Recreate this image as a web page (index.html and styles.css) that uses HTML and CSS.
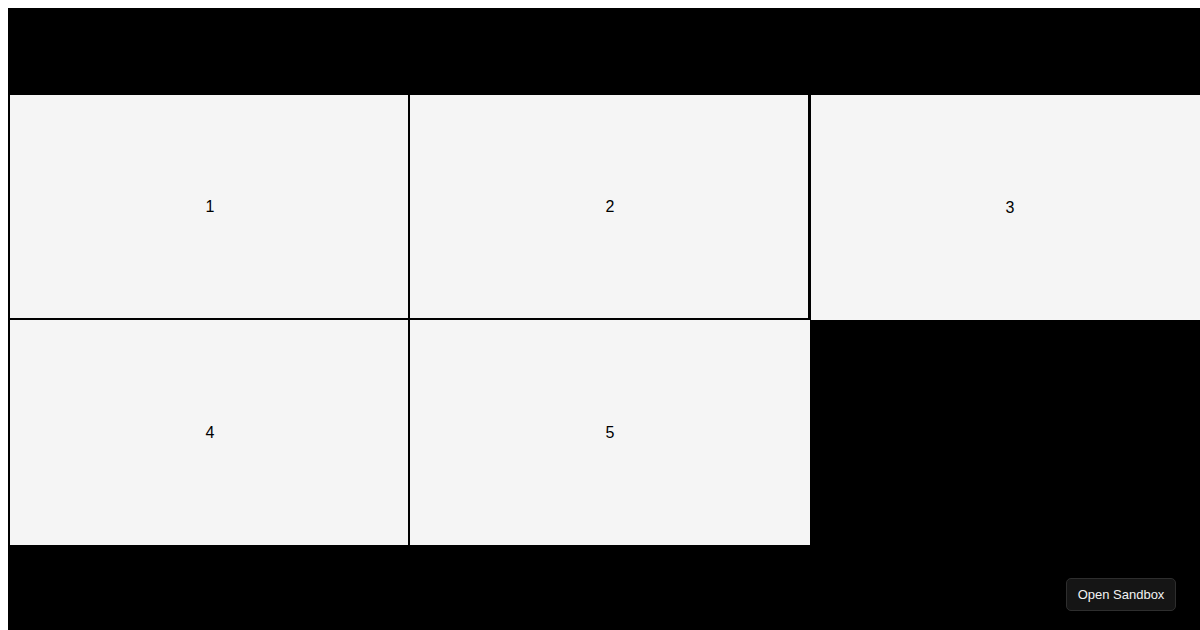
FILE: index.html
```html
<!DOCTYPE html>
<html>
<head>
<meta charset="utf-8">
<link rel="stylesheet" href="styles.css">
</head>
<body>
<div class="board">
  <div class="grid">
    <div class="cell cell-top">1</div>
    <div class="cell cell-top">2</div>
    <div class="cell cell-lifted">3</div>
    <div class="cell cell-tall">4</div>
    <div class="cell cell-tall cell-wide">5</div>
  </div>
</div>
<button class="sandbox-btn">Open Sandbox</button>
</body>
</html>
```
FILE: styles.css
```css
body {
  margin: 8px 0 0 8px;
  background: #ffffff;
  font-family: "Liberation Sans", Arial, sans-serif;
}
.board {
  height: calc(100vh - 8px);
  background: #000000;
  padding: 87px 0 0 2px;
  box-sizing: border-box;
  overflow: hidden;
}
.grid {
  display: grid;
  grid-template-columns: 398px 398px 400px;
  grid-template-rows: 223px 225px;
  column-gap: 2px;
  row-gap: 2px;
  align-items: start;
  justify-items: start;
}
.cell {
  box-sizing: border-box;
  background: #f5f5f5;
  color: #000000;
  font-size: 16px;
  display: flex;
  align-items: center;
  justify-content: center;
  width: 398px;
  height: 223px;
  padding-left: 2px;
}
.cell-top {
  padding-top: 1px;
}
.cell-lifted {
  width: 400px;
  height: 225px;
  margin-left: 1px;
  margin-bottom: -2px;
  padding-left: 0;
  padding-right: 2px;
}
.cell-tall {
  height: 225px;
}
.cell-wide {
  width: 400px;
  padding-left: 0;
}
.sandbox-btn {
  position: fixed;
  right: 24px;
  bottom: 19px;
  width: 110px;
  height: 33px;
  background: #151515;
  color: #f2f2f2;
  border: 1px solid #2e2e2e;
  border-radius: 5px;
  font-family: "Liberation Sans", Arial, sans-serif;
  font-size: 13px;
  padding: 0;
  cursor: pointer;
}
```
